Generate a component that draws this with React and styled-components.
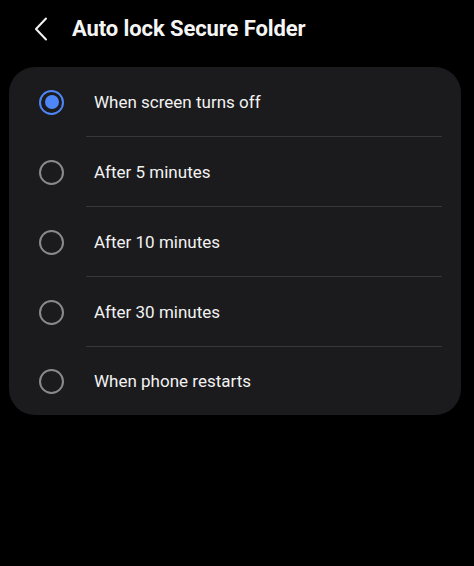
import React, { useState } from "react";
import styled, { createGlobalStyle } from "styled-components";

const GlobalStyle = createGlobalStyle`
  html, body {
    margin: 0;
    padding: 0;
    background: #000;
  }
  body {
    font-family: Roboto, "Noto Sans", sans-serif;
    -webkit-font-smoothing: antialiased;
  }
`;

const Screen = styled.div`
  width: 474px;
  height: 566px;
  background: #000;
  display: flex;
  flex-direction: column;
`;

const Header = styled.div`
  height: 57px;
  display: flex;
  align-items: center;
  padding-left: 29px;
  gap: 20px;
`;

const BackButton = styled.button`
  border: none;
  background: transparent;
  padding: 0;
  width: 23px;
  height: 26px;
  display: flex;
  align-items: center;
  justify-content: center;
  cursor: pointer;
`;

const Title = styled.h1`
  margin: 0;
  color: #f5f5f5;
  font-size: 22px;
  font-weight: 700;
  letter-spacing: -0.1px;
`;

const Card = styled.div`
  margin: 10px 13px 0 9px;
  background: #1b1b1d;
  border-radius: 26px;
  display: flex;
  flex-direction: column;
`;

const Row = styled.label`
  height: 70px;
  display: flex;
  align-items: center;
  cursor: pointer;
  &:last-child {
    height: 68px;
  }
`;

const RadioCell = styled.div`
  width: 77px;
  display: flex;
  justify-content: flex-start;
  padding-left: 30px;
  box-sizing: border-box;
`;

const Radio = styled.span`
  width: 25px;
  height: 25px;
  box-sizing: border-box;
  border-radius: 50%;
  border: ${(p) => (p.checked ? "2.5px solid #4f86f7" : "2px solid #8a8a8c")};
  display: flex;
  align-items: center;
  justify-content: center;
  &::after {
    content: "";
    display: ${(p) => (p.checked ? "block" : "none")};
    width: 14px;
    height: 14px;
    border-radius: 50%;
    background: #4f86f7;
  }
`;

const Body = styled.div`
  flex: 1;
  height: 100%;
  display: flex;
  align-items: center;
  margin-right: 19px;
  border-bottom: ${(p) => (p.last ? "none" : "1.5px solid #37373a")};
  box-sizing: border-box;
  padding-top: ${(p) => (p.last ? "0" : "1px")};
`;

const Label = styled.span`
  color: #f2f2f2;
  font-size: 17px;
  font-weight: 400;
  margin-left: 8px;
`;

const options = [
  "When screen turns off",
  "After 5 minutes",
  "After 10 minutes",
  "After 30 minutes",
  "When phone restarts",
];

const App = () => {
  const [selected, setSelected] = useState(0);

  return (
    <Screen>
      <GlobalStyle />
      <Header>
        <BackButton>
          <svg width="14" height="24" viewBox="0 0 14 24" fill="none">
            <path
              d="M12 1.5 L2 12 L12 22.5"
              stroke="#f2f2f2"
              strokeWidth="2"
              strokeLinecap="round"
              strokeLinejoin="round"
            />
          </svg>
        </BackButton>
        <Title>Auto lock Secure Folder</Title>
      </Header>
      <Card>
        {options.map((opt, i) => (
          <Row key={opt} onClick={() => setSelected(i)}>
            <RadioCell>
              <Radio checked={selected === i} />
            </RadioCell>
            <Body last={i === options.length - 1}>
              <Label>{opt}</Label>
            </Body>
          </Row>
        ))}
      </Card>
    </Screen>
  );
};

export default App;
